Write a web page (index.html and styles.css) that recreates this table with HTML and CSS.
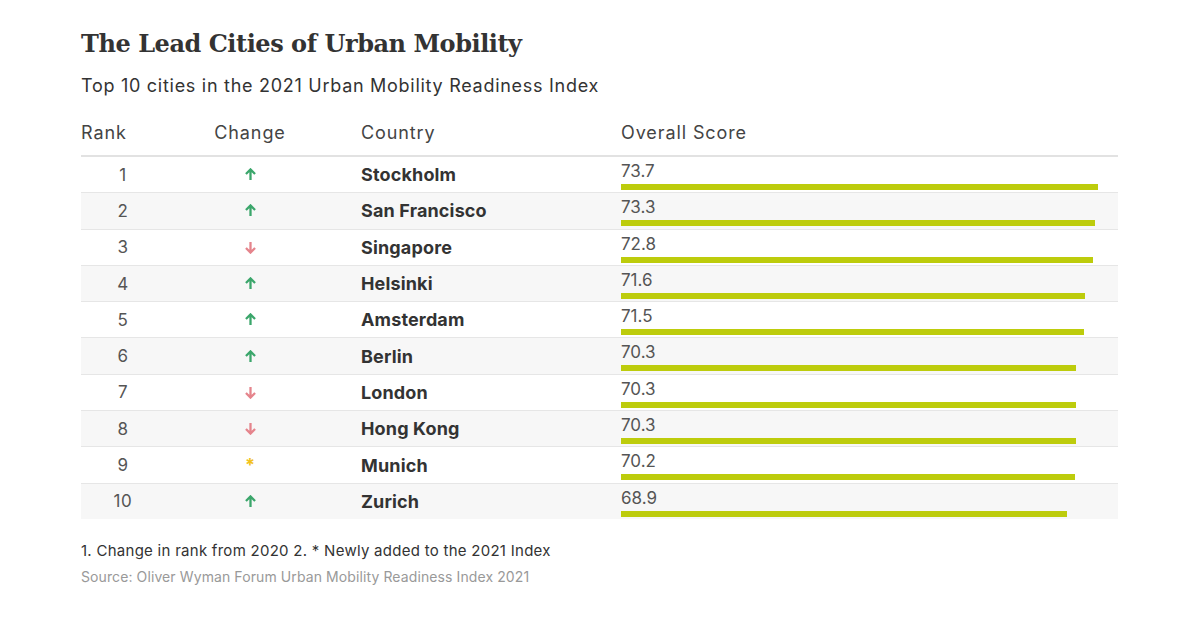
FILE: index.html
```html
<!DOCTYPE html>
<html>
<head>
<meta charset="utf-8">
<link rel="stylesheet" href="styles.css">
</head>
<body>
<div class="chart">
  <h1 class="title">The Lead Cities of Urban Mobility</h1>
  <p class="subtitle">Top 10 cities in the 2021 Urban Mobility Readiness Index</p>
  <div class="table">
    <div class="row head">
      <div class="cell rank-h">Rank</div>
      <div class="cell change">Change</div>
      <div class="cell country-h">Country</div>
      <div class="cell score-h">Overall Score</div>
    </div>
    <div class="row">
      <div class="cell rank">1</div>
      <div class="cell change"><svg class="ic up" viewBox="0 0 12 12"><path d="M6 11V1.5M1.8 5.5L6 1.3l4.2 4.2"/></svg></div>
      <div class="cell country">Stockholm</div>
      <div class="cell score"><span class="val">73.7</span><span class="bar" style="width:477px"></span></div>
    </div>
    <div class="row">
      <div class="cell rank">2</div>
      <div class="cell change"><svg class="ic up" viewBox="0 0 12 12"><path d="M6 11V1.5M1.8 5.5L6 1.3l4.2 4.2"/></svg></div>
      <div class="cell country">San Francisco</div>
      <div class="cell score"><span class="val">73.3</span><span class="bar" style="width:474px"></span></div>
    </div>
    <div class="row">
      <div class="cell rank">3</div>
      <div class="cell change"><svg class="ic down" viewBox="0 0 12 12"><path d="M6 1v9.5M1.8 6.5L6 10.7l4.2-4.2"/></svg></div>
      <div class="cell country">Singapore</div>
      <div class="cell score"><span class="val">72.8</span><span class="bar" style="width:472px"></span></div>
    </div>
    <div class="row">
      <div class="cell rank">4</div>
      <div class="cell change"><svg class="ic up" viewBox="0 0 12 12"><path d="M6 11V1.5M1.8 5.5L6 1.3l4.2 4.2"/></svg></div>
      <div class="cell country">Helsinki</div>
      <div class="cell score"><span class="val">71.6</span><span class="bar" style="width:464px"></span></div>
    </div>
    <div class="row">
      <div class="cell rank">5</div>
      <div class="cell change"><svg class="ic up" viewBox="0 0 12 12"><path d="M6 11V1.5M1.8 5.5L6 1.3l4.2 4.2"/></svg></div>
      <div class="cell country">Amsterdam</div>
      <div class="cell score"><span class="val">71.5</span><span class="bar" style="width:463px"></span></div>
    </div>
    <div class="row">
      <div class="cell rank">6</div>
      <div class="cell change"><svg class="ic up" viewBox="0 0 12 12"><path d="M6 11V1.5M1.8 5.5L6 1.3l4.2 4.2"/></svg></div>
      <div class="cell country">Berlin</div>
      <div class="cell score"><span class="val">70.3</span><span class="bar" style="width:455px"></span></div>
    </div>
    <div class="row">
      <div class="cell rank">7</div>
      <div class="cell change"><svg class="ic down" viewBox="0 0 12 12"><path d="M6 1v9.5M1.8 6.5L6 10.7l4.2-4.2"/></svg></div>
      <div class="cell country">London</div>
      <div class="cell score"><span class="val">70.3</span><span class="bar" style="width:455px"></span></div>
    </div>
    <div class="row">
      <div class="cell rank">8</div>
      <div class="cell change"><svg class="ic down" viewBox="0 0 12 12"><path d="M6 1v9.5M1.8 6.5L6 10.7l4.2-4.2"/></svg></div>
      <div class="cell country">Hong Kong</div>
      <div class="cell score"><span class="val">70.3</span><span class="bar" style="width:455px"></span></div>
    </div>
    <div class="row">
      <div class="cell rank">9</div>
      <div class="cell change"><span class="star">*</span></div>
      <div class="cell country">Munich</div>
      <div class="cell score"><span class="val">70.2</span><span class="bar" style="width:454px"></span></div>
    </div>
    <div class="row">
      <div class="cell rank">10</div>
      <div class="cell change"><svg class="ic up" viewBox="0 0 12 12"><path d="M6 11V1.5M1.8 5.5L6 1.3l4.2 4.2"/></svg></div>
      <div class="cell country">Zurich</div>
      <div class="cell score"><span class="val">68.9</span><span class="bar" style="width:446px"></span></div>
    </div>
  </div>
  <p class="note">1. Change in rank from 2020 2. * Newly added to the 2021 Index</p>
  <p class="source">Source: Oliver Wyman Forum Urban Mobility Readiness Index 2021</p>
</div>
</body>
</html>
```
FILE: styles.css
```css
html, body {
  margin: 0;
  padding: 0;
  background: #ffffff;
}
body {
  font-family: Inter, "Noto Sans", sans-serif;
  color: #333333;
}
.chart {
  padding: 28px 0 0 81px;
  width: 1037px;
}
.title {
  margin: 0;
  font-family: "DejaVu Serif", serif;
  font-weight: bold;
  font-size: 24px;
  line-height: 32px;
  color: #333333;
  letter-spacing: -0.45px;
}
.subtitle {
  margin: 14px 0 0;
  font-size: 18px;
  line-height: 24px;
  letter-spacing: 0.72px;
  color: #333333;
}
.table {
  margin-top: 17px;
}
.row {
  display: grid;
  grid-template-columns: 84px 170px 260px 1fr;
  height: 35.3px;
  border-bottom: 1px solid #e6e6e6;
  align-items: center;
}
.row:nth-child(odd) {
  background: #f7f7f7;
}
.row.head {
  background: #ffffff;
  height: 33px;
  padding-top: 7px;
  align-items: start;
  border-bottom: 2px solid #e2e2e2;
  font-size: 18px;
  line-height: 22px;
  letter-spacing: 0.9px;
  color: #444444;
}
.row:last-child {
  border-bottom: none;
}
.cell {
  display: flex;
  align-items: center;
}
.rank-h {
  justify-content: flex-start;
}
.rank {
  justify-content: center;
  font-size: 17px;
  letter-spacing: 0.6px;
  color: #555555;
}
.change {
  justify-content: center;
}
.country, .country-h {
  padding-left: 26px;
}
.country {
  font-weight: 700;
  font-size: 18px;
  letter-spacing: 0.15px;
  color: #333333;
}
.score-h {
  padding-left: 26px;
}
.score {
  padding-left: 26px;
  flex-direction: column;
  align-items: flex-start;
  justify-content: flex-start;
  height: 100%;
}
.val {
  font-size: 17px;
  line-height: 18px;
  margin-top: 5px;
  color: #555555;
}
.bar {
  display: block;
  height: 6px;
  margin-top: 4px;
  background: #bdcc0c;
}
.ic {
  width: 13px;
  height: 13px;
  fill: none;
  stroke-width: 2.1;
  stroke-linecap: butt;
  stroke-linejoin: miter;
}
.ic.up { stroke: #3ba66b; }
.ic.down { stroke: #e5848c; }
.star {
  color: #f2c21b;
  font-size: 18px;
  font-weight: 700;
  line-height: 12px;
  height: 12px;
}
.note {
  margin: 22px 0 0;
  font-size: 15px;
  line-height: 20px;
  letter-spacing: 0.27px;
  color: #333333;
}
.source {
  margin: 7px 0 0;
  font-size: 14px;
  line-height: 18px;
  letter-spacing: 0.1px;
  color: #999999;
}
```
